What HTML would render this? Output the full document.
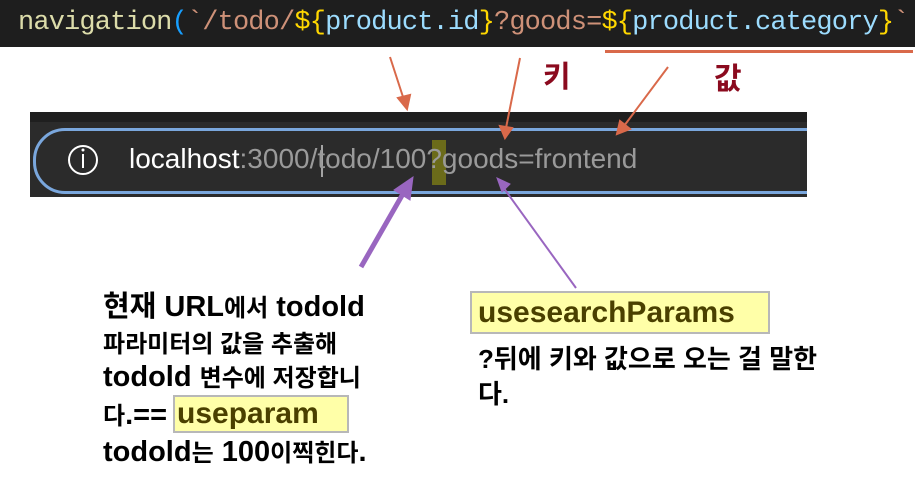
<!DOCTYPE html>
<html><head><meta charset="utf-8"><style>
body{margin:0;width:915px;height:500px;background:#fff;position:relative;overflow:hidden;font-family:"Liberation Sans","Noto Sans CJK KR",sans-serif}
.a{position:absolute;white-space:nowrap}
.code{left:0;top:0;width:915px;height:47px;background:#1e1e1e}
.code span.t{position:absolute;left:18px;top:8px;font-family:"Liberation Mono",monospace;font-size:27px;letter-spacing:-0.85px;color:#ce9178}
.bar{left:30px;top:112px;width:777px;height:85px;background:#2b2b2b;border-top:10px solid #1f1f1f;box-sizing:border-box;overflow:hidden}
.pill{position:absolute;left:3px;top:6px;width:900px;height:60px;border:3px solid #7aa7dd;border-radius:32px}
.b{font-weight:bold;color:#000;font-size:29px}
.k{font-size:24px}
.hl{position:absolute;background:#ffffa8;border:2px solid #b8b8b8;box-sizing:border-box;color:#4a4000;font-weight:bold;font-size:30px;padding-left:6px}
</style></head><body>
<div class="a code"><span class="t"><span style="color:#dcdcaa">navigation</span><span style="color:#179fff">(</span>`/todo/<span style="color:#ffd700">${</span><span style="color:#9cdcfe">product.id</span><span style="color:#ffd700">}</span>?goods=<span style="color:#ffd700">${</span><span style="color:#9cdcfe">product.category</span><span style="color:#ffd700">}</span>`</span></div>
<div class="a" style="left:605px;top:50px;width:308px;height:3px;background:#d9694a"></div>
<div class="a" style="left:543px;top:52px;color:#8b0a1e;font-weight:bold;font-size:30px">키</div>
<div class="a" style="left:714px;top:54px;color:#8b0a1e;font-weight:bold;font-size:30px">값</div>
<div class="a bar"><div class="pill"></div></div>
<div class="a" style="left:432px;top:140px;width:14px;height:45px;background:#6b6b1a"></div>
<svg class="a" style="left:0;top:0" width="915" height="500">
<circle cx="83" cy="160" r="14" fill="none" stroke="#fff" stroke-width="2"/>
<line x1="83" y1="154" x2="83" y2="168" stroke="#fff" stroke-width="2"/>
<circle cx="83" cy="150" r="1.5" fill="#fff"/>
<line x1="322" y1="145" x2="322" y2="177" stroke="#ccc" stroke-width="1.5"/>
<g stroke="#d9694a" stroke-width="2" fill="#d9694a">
<line x1="390" y1="57" x2="404" y2="100"/><polygon points="407,109 398,98 410,95"/>
<line x1="520" y1="58" x2="506" y2="128"/><polygon points="505,138 500,126 512,128"/>
<line x1="668" y1="67" x2="624" y2="126"/><polygon points="617,134 620,121 630,129"/>
</g>
<g stroke="#9966c0" fill="#9966c0">
<line x1="361" y1="267" x2="404" y2="192" stroke-width="5"/><polygon points="413,177 410,200 394,190"/>
<line x1="576" y1="288" x2="503" y2="187" stroke-width="2"/><polygon points="497,178 510,184 502,192"/>
</g>
</svg>
<div class="a" style="left:129px;top:143px;font-size:28px;letter-spacing:0px;color:#fff">localhost<span style="color:#9a9a9a">:3000/todo/100?goods=frontend</span></div>
<div class="a b" style="left:103px;top:283px">현재 URL<span class="k">에서</span> todold</div>
<div class="a b k" style="left:103px;top:324px">파라미터의 값을 추출해</div>
<div class="a b" style="left:103px;top:358px">todold <span class="k">변수에 저장합니</span></div>
<div class="a b" style="left:103px;top:396px"><span class="k">다</span>.==</div>
<div class="hl" style="left:173px;top:395px;width:176px;height:38px;line-height:34px;padding-left:2px">useparam</div>
<div class="a b" style="left:103px;top:433px">todold<span class="k">는</span> 100<span class="k">이찍힌다</span>.</div>
<div class="hl" style="left:470px;top:291px;width:300px;height:43px;line-height:40px">usesearchParams</div>
<div class="a b" style="left:478px;top:339px;font-size:26px">?뒤에 키와 값으로 오는 걸 말한</div>
<div class="a b" style="left:478px;top:374px;font-size:26px">다.</div>
</body></html>
